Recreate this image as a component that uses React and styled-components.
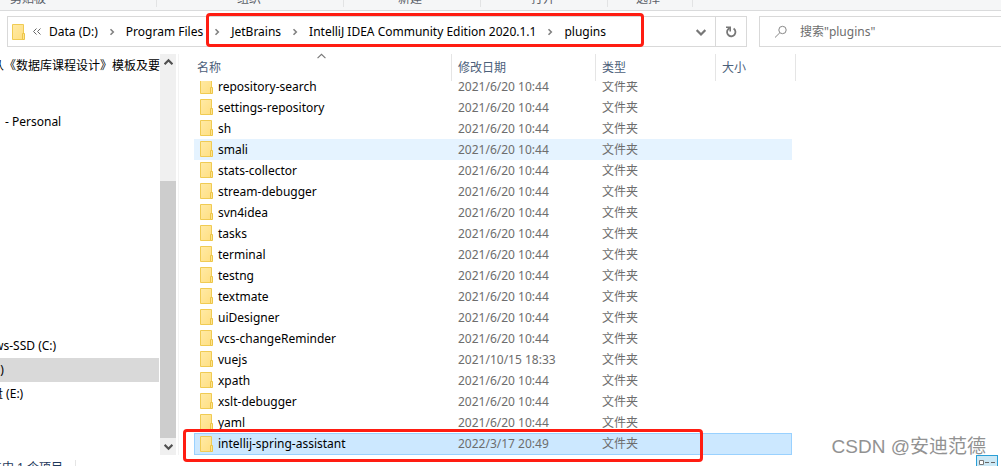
import React from "react";
import styled, { createGlobalStyle } from "styled-components";

const ribbonGroups = [
  { label: "剪贴板", width: 157, inset: 10 },
  { label: "组织", width: 187, inset: 80 },
  { label: "新建", width: 137, inset: 54 },
  { label: "打开", width: 127, inset: 50 },
  { label: "选择", width: 85, inset: 28 },
];

const crumbs = [
  "Data (D:)",
  "Program Files",
  "JetBrains",
  "IntelliJ IDEA Community Edition 2020.1.1",
  "plugins",
];

const DEFAULT_DATE = "2021/6/20 10:44";

const folders = [
  { name: "repository-search" },
  { name: "settings-repository" },
  { name: "sh" },
  { name: "smali", state: "hover" },
  { name: "stats-collector" },
  { name: "stream-debugger" },
  { name: "svn4idea" },
  { name: "tasks" },
  { name: "terminal" },
  { name: "testng" },
  { name: "textmate" },
  { name: "uiDesigner" },
  { name: "vcs-changeReminder" },
  { name: "vuejs", date: "2021/10/15 18:33" },
  { name: "xpath" },
  { name: "xslt-debugger" },
  { name: "yaml" },
  {
    name: "intellij-spring-assistant",
    date: "2022/3/17 20:49",
    state: "selected",
  },
];

const FolderIcon = () => (
  <svg width="13" height="16" viewBox="0 0 13 16" aria-hidden="true">
    <defs>
      <linearGradient id="folder" x1="0" y1="0" x2="1" y2="1">
        <stop offset="0" stopColor="#ffeaa6" />
        <stop offset="1" stopColor="#ffdf82" />
      </linearGradient>
    </defs>
    <path d="M.5.5h11v15H.5z" fill="url(#folder)" stroke="#f0cb53" />
    <path d="M10.5 15.5v-6h2v6z" fill="#ffe48f" stroke="#ecc548" />
  </svg>
);

const Chevron = ({ dir = "right", size = 8, weight = 2, color = "#777" }) => {
  const paths = {
    right: "M2.5 1.2l2.8 2.8-2.8 2.8",
    down: "M0.5 2.5l3.5 3.5 3.5-3.5",
    up: "M0.5 5.5l3.5-3.5 3.5 3.5",
  };
  return (
    <svg width={size} height={size} viewBox="0 0 8 8" aria-hidden="true">
      <path d={paths[dir]} fill="none" stroke={color} strokeWidth={weight} />
    </svg>
  );
};

const App = () => {
  return (
    <Window>
      <GlobalStyle />
      <Ribbon>
        {ribbonGroups.map((group) => (
          <RibbonGroup key={group.label} $width={group.width} $inset={group.inset}>
            {group.label}
          </RibbonGroup>
        ))}
      </Ribbon>

      <NavBar>
        <AddressBox>
          <FolderIcon />
          <Overflow type="button" aria-label="上级目录">
            <svg width="8" height="7" viewBox="0 0 8 7">
              <path
                d="M3.5.5l-3 3 3 3M7.5.5l-3 3 3 3"
                fill="none"
                stroke="#666"
              />
            </svg>
          </Overflow>
          <Crumbs>
            {crumbs.map((crumb, i) => (
              <React.Fragment key={crumb}>
                {i > 0 && <Chevron weight={1.6} color="#808080" />}
                <a href="#path">{crumb}</a>
              </React.Fragment>
            ))}
          </Crumbs>
          <BoxButton type="button" aria-label="以前的位置">
            <Chevron dir="down" size={10} weight={1.8} color="#777" />
          </BoxButton>
          <BoxButton type="button" aria-label="刷新" $divided>
            <svg width="12" height="12" viewBox="0 0 12 12">
              <path
                d="M8.6 2.6A4.2 4.2 0 1 1 3.2 3.2L4.6 2"
                fill="none"
                stroke="#777"
                strokeWidth="1.8"
              />
              <path d="M1 .5h5v5H4.4V2H1z" fill="#777" />
            </svg>
          </BoxButton>
        </AddressBox>
        <SearchBox>
          <svg width="14" height="14" viewBox="0 0 14 14" aria-hidden="true">
            <circle cx="8.5" cy="5" r="3.7" fill="none" stroke="#888" />
            <path d="M5.8 7.8L1 12.5" stroke="#888" />
          </svg>
          <input
            type="text"
            aria-label="搜索"
            placeholder={'搜索"plugins"'}
          />
        </SearchBox>
      </NavBar>

      <Body>
        <Tree>
          <TreeItem $shift={-8}>从《数据库课程设计》模板及要</TreeItem>
          <TreeItem $before={32} $shift={5}>
            - Personal
          </TreeItem>
          <TreeItem $before={200} $shift={-42}>
            Windows-SSD (C:)
          </TreeItem>
          <TreeItem $shift={-45} $active>
            Data (D:)
          </TreeItem>
          <TreeItem $shift={-45}>本地磁盘 (E:)</TreeItem>
        </Tree>
        <ScrollBar>
          <ScrollButton type="button" aria-label="向上滚动">
            <Chevron dir="up" size={9} color="#505050" />
          </ScrollButton>
          <ScrollThumb />
          <ScrollButton type="button" aria-label="向下滚动">
            <Chevron dir="down" size={9} color="#505050" />
          </ScrollButton>
        </ScrollBar>
        <FilePane>
          <FileTable>
            <colgroup>
              <col width="258" />
              <col width="144" />
              <col width="120" />
              <col width="80" />
            </colgroup>
            <thead>
              <tr>
                <HeadCell>
                  名称
                  <SortMark>
                    <Chevron dir="up" size={9} weight={1} />
                  </SortMark>
                </HeadCell>
                <HeadCell>修改日期</HeadCell>
                <HeadCell>类型</HeadCell>
                <HeadCell>大小</HeadCell>
              </tr>
            </thead>
          </FileTable>
          <ScrolledRows>
            <FileTable>
              <colgroup>
                <col width="258" />
                <col width="144" />
                <col width="196" />
              </colgroup>
              <tbody>
                {folders.map((folder) => (
                  <FileRow key={folder.name} $state={folder.state}>
                    <td>
                      <FileName>
                        <FolderIcon />
                        {folder.name}
                      </FileName>
                    </td>
                    <td>{folder.date || DEFAULT_DATE}</td>
                    <td>文件夹</td>
                  </FileRow>
                ))}
              </tbody>
            </FileTable>
          </ScrolledRows>
        </FilePane>
      </Body>

      <StatusBar>
        <StatusText>选中 1 个项目</StatusText>
        <ViewButton type="button" aria-label="详细信息">
          <svg width="17" height="14" viewBox="0 0 17 14">
            <path
              d="M.5 1.5h4v4h-4zM.5 8.5h4v4h-4z"
              fill="#fff"
              stroke="#777"
            />
            <path
              d="M6 3.5h4M12 3.5h4M6 10.5h4M12 10.5h4"
              stroke="#666"
            />
          </svg>
        </ViewButton>
      </StatusBar>

      <PathMarker />
      <RowMarker />
      <Watermark>CSDN @安迪范德</Watermark>
    </Window>
  );
};

const GlobalStyle = createGlobalStyle`
  * {
    box-sizing: border-box;
  }
  body {
    margin: 0;
    background: #fff;
    color: #000;
    font: 12px/16px "Noto Sans", "Noto Sans CJK SC", sans-serif;
  }
  button, input {
    padding: 0;
    border: 0;
    background: none;
    font: inherit;
  }
  a {
    color: inherit;
    text-decoration: none;
  }
  svg {
    display: block;
    flex: none;
  }
`;

const Window = styled.div`
  position: relative;
  display: flex;
  flex-direction: column;
  height: 100vh;
  overflow: hidden;
`;

const Ribbon = styled.div`
  display: flex;
  flex: none;
  align-items: flex-end;
  height: 11px;
  padding-bottom: 3px;
  overflow: hidden;
  background: #f5f6f7;
  border-bottom: 1px solid #dadbdc;
`;

const RibbonGroup = styled.div`
  width: ${(props) => props.$width}px;
  padding-left: ${(props) => props.$inset}px;
  border-right: 1px solid #e2e3e4;
  color: #5a6068;
`;

const NavBar = styled.div`
  display: flex;
  flex: none;
  gap: 12px;
  padding: 5px 0 7px 7px;
`;

const AddressBox = styled.div`
  display: flex;
  flex: 0 0 740px;
  align-items: center;
  height: 31px;
  padding-left: 4px;
  border: 1px solid #d9d9d9;
`;

const Overflow = styled.button`
  margin: 0 8px;
`;

const Crumbs = styled.nav`
  display: flex;
  flex: 1;
  align-items: center;
  gap: 10px;
  white-space: nowrap;
`;

const BoxButton = styled.button`
  display: flex;
  align-items: center;
  justify-content: center;
  width: ${(props) => (props.$divided ? 31 : 29)}px;
  height: 29px;
  border-left: ${(props) => (props.$divided ? "1px solid #d9d9d9" : "0")};
`;

const SearchBox = styled.label`
  display: flex;
  flex: 1;
  align-items: center;
  gap: 12px;
  height: 31px;
  padding-left: 14px;
  border: 1px solid #d9d9d9;
  border-right: 0;

  input {
    flex: 1;
    min-width: 0;
    outline: 0;
  }
  input::placeholder {
    color: #6d6d6d;
    opacity: 1;
  }
`;

const Body = styled.div`
  display: flex;
  flex: none;
`;

const Tree = styled.div`
  width: 160px;
  overflow: hidden;
  white-space: nowrap;
`;

const TreeItem = styled.div`
  height: 24px;
  margin: ${(props) => props.$before || 0}px 1px 0 0;
  line-height: 24px;
  text-indent: ${(props) => props.$shift}px;
  background: ${(props) => (props.$active ? "#d9d9d9" : "none")};
`;

const ScrollBar = styled.div`
  display: flex;
  flex-direction: column;
  width: 16px;
  background: #f0f0f0;
`;

const ScrollButton = styled.button`
  display: flex;
  align-items: center;
  justify-content: center;
  height: 17px;
`;

const ScrollThumb = styled.div`
  flex: 1;
  margin-top: 110px;
  background: #cdcdcd;
`;

const FilePane = styled.div`
  flex: 1;
  margin-left: 2px;
  padding-left: 15px;
  border-left: 1px solid #f3f3f3;
`;

const FileTable = styled.table`
  width: 1px;
  table-layout: fixed;
  border-collapse: separate;
  border-spacing: 0;
`;

const HeadCell = styled.th`
  position: relative;
  height: 27px;
  padding: 0 0 0 6px;
  border-right: 1px solid #e5e5e5;
  color: #4c607a;
  font-weight: 400;
  text-align: left;

  &:first-child {
    padding-left: 3px;
  }
`;

const SortMark = styled.span`
  position: absolute;
  top: -2px;
  left: 123px;
`;

/* scrolled to the end, so the first row slips under the header */
const ScrolledRows = styled.div`
  display: flex;
  flex-direction: column;
  justify-content: flex-end;
  height: 374px;
  overflow: hidden;
`;

const FileRow = styled.tr`
  color: #6d6d6d;
  background: ${(props) =>
    ({ hover: "#e5f3ff", selected: "#cce8ff" })[props.$state] || "none"};
  outline: ${(props) =>
    props.$state === "selected" ? "1px solid #99d1ff" : "none"};
  outline-offset: -1px;

  td {
    height: ${(props) => (props.$state === "selected" ? 22 : 21)}px;
    padding: 0 0 0 6px;
  }
`;

const FileName = styled.div`
  display: flex;
  align-items: center;
  gap: 5px;
  color: #000;

  svg {
    margin-bottom: 1px;
  }
`;

const StatusBar = styled.div`
  display: flex;
  flex: none;
  justify-content: space-between;
  height: 24px;
  padding-right: 3px;
`;

const StatusText = styled.div`
  height: 16px;
  margin-top: 5px;
  padding-right: 12px;
  border-right: 1px solid #e5e5e5;
  color: #1e395b;
  text-indent: -10px;
`;

const ViewButton = styled.button`
  display: flex;
  justify-content: center;
  width: 22px;
  height: 22px;
  padding-top: 3px;
  border: 1px solid #2a9fd6;
  background: #cce8f5;
`;

const Marker = styled.div`
  position: absolute;
  border: 3px solid #ff1d12;
  border-radius: 4px;
  pointer-events: none;
`;

const PathMarker = styled(Marker)`
  top: 13px;
  left: 206px;
  width: 438px;
  height: 34px;
`;

const RowMarker = styled(Marker)`
  top: 429px;
  left: 183px;
  width: 520px;
  height: 33px;
`;

const Watermark = styled.div`
  position: absolute;
  right: 15px;
  bottom: 7px;
  color: #929292;
  font: 19px/24px "Liberation Sans", "Noto Sans CJK SC", sans-serif;
`;

export default App;
